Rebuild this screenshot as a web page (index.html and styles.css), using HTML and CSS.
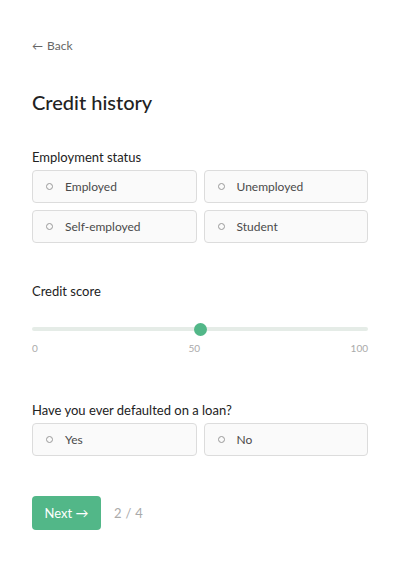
FILE: index.html
```html
<!DOCTYPE html>
<html lang="en">
<head>
<meta charset="utf-8">
<title>Credit history</title>
<link rel="stylesheet" href="styles.css">
</head>
<body>
<main class="page">
  <a class="back" href="#"><span class="back-arrow">←</span> Back</a>
  <h1 class="title">Credit history</h1>

  <section class="field">
    <div class="label">Employment status</div>
    <div class="options">
      <label class="option"><span class="radio"></span>Employed</label>
      <label class="option"><span class="radio"></span>Unemployed</label>
      <label class="option"><span class="radio"></span>Self-employed</label>
      <label class="option"><span class="radio"></span>Student</label>
    </div>
  </section>

  <section class="field score">
    <div class="label">Credit score</div>
    <div class="slider">
      <div class="track"></div>
      <div class="thumb" style="left: 50%"></div>
    </div>
    <div class="ticks"><span>0</span><span>50</span><span>100</span></div>
  </section>

  <section class="field loan">
    <div class="label">Have you ever defaulted on a loan?</div>
    <div class="options">
      <label class="option"><span class="radio"></span>Yes</label>
      <label class="option"><span class="radio"></span>No</label>
    </div>
  </section>

  <div class="actions">
    <button class="next">Next →</button>
    <span class="step">2 / 4</span>
  </div>
</main>
</body>
</html>
```

FILE: styles.css
```css
* { box-sizing: border-box; }
html, body { margin: 0; padding: 0; background: #fff; }
body {
  font-family: "Lato", "Noto Sans", "DejaVu Sans", sans-serif;
  color: #222;
}
.page {
  padding: 38px 32px 32px;
  display: flex;
  flex-direction: column;
}
.back {
  color: #666;
  font-size: 12px;
  text-decoration: none;
  line-height: 16px;
  height: 16px;
}
.back-arrow { font-size: 11px; margin-right: 1px; }
.title {
  margin: 33px 0 0;
  font-size: 20px;
  font-weight: 500;
  line-height: 30px;
  color: #222;
}
.field { margin-top: 30px; }
.label {
  font-size: 13px;
  line-height: 20px;
  color: #222;
}
.options {
  margin-top: 3px;
  display: grid;
  grid-template-columns: 1fr 1fr;
  gap: 7px;
}
.option {
  display: flex;
  align-items: center;
  height: 33px;
  border: 1px solid #dcdcdc;
  border-radius: 4px;
  background: #fafafa;
  padding-left: 13px;
  font-size: 12px;
  color: #4a4a4a;
}
.radio {
  width: 7px;
  height: 7px;
  border: 1px solid #999;
  border-radius: 50%;
  margin-right: 12px;
  flex: none;
}
.score { margin-top: 38px; }
.slider {
  position: relative;
  margin-top: 20px;
  height: 16px;
  display: flex;
  align-items: center;
}
.track {
  width: 100%;
  height: 4px;
  border-radius: 2px;
  background: #e5ece7;
}
.thumb {
  position: absolute;
  top: 2px;
  width: 13px;
  height: 13px;
  margin-left: -6.5px;
  border-radius: 50%;
  background: #52b788;
}
.ticks {
  margin-top: 4px;
  display: flex;
  justify-content: space-between;
  font-size: 10px;
  line-height: 14px;
  color: #aaa;
}
.loan { margin-top: 45px; }
.actions {
  margin-top: 40px;
  display: flex;
  align-items: center;
  gap: 13px;
}
.next {
  height: 34px;
  width: 69px;
  border: none;
  border-radius: 4px;
  background: #52b788;
  color: #fff;
  font-family: inherit;
  font-size: 13px;
  padding: 0;
}
.step {
  font-size: 13px;
  color: #aaa;
  letter-spacing: 0.3px;
}
```
